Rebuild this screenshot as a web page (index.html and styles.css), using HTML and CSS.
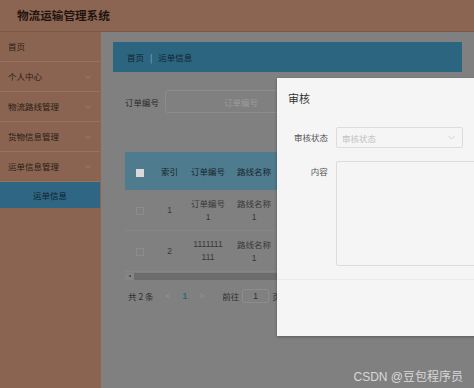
FILE: index.html
```html
<!DOCTYPE html>
<html lang="zh-CN">
<head>
    <meta charset="UTF-8">
    <meta name="viewport" content="width=device-width, initial-scale=1.0">
    <title>物流运输管理系统</title>
    <link rel="stylesheet" href="styles.css">
</head>
<body>
    <div class="header">
        <h1>物流运输管理系统</h1>
    </div>

    <div class="layout">
        <aside class="sidebar">
            <ul class="menu">
                <li class="menu-item">首页</li>
                <li class="menu-item">个人中心<span class="arrow"></span></li>
                <li class="menu-item">物流路线管理<span class="arrow"></span></li>
                <li class="menu-item">货物信息管理<span class="arrow"></span></li>
                <li class="menu-item">运单信息管理<span class="arrow"></span></li>
                <li class="menu-sub active">运单信息</li>
            </ul>
        </aside>

        <main class="main">
            <div class="breadcrumb">
                <span>首页</span>
                <span class="sep">|</span>
                <span>运单信息</span>
            </div>

            <div class="content">
                <form class="search">
                    <label for="orderNo">订单编号</label>
                    <input type="text" id="orderNo" placeholder="订单编号">
                </form>

                <div class="table-wrap">
                    <table class="grid">
                        <colgroup>
                            <col style="width:30px">
                            <col style="width:29px">
                            <col style="width:48px">
                            <col style="width:44px">
                            <col style="width:60px">
                        </colgroup>
                        <thead>
                            <tr>
                                <th><span class="check checked"></span></th>
                                <th>索引</th>
                                <th>订单编号</th>
                                <th>路线名称</th>
                                <th></th>
                            </tr>
                        </thead>
                        <tbody>
                            <tr>
                                <td><span class="check"></span></td>
                                <td class="num">1</td>
                                <td>订单编号<br><span class="num">1</span></td>
                                <td>路线名称<br><span class="num">1</span></td>
                                <td></td>
                            </tr>
                            <tr>
                                <td><span class="check"></span></td>
                                <td class="num">2</td>
                                <td class="num">1111111<br>111</td>
                                <td>路线名称<br><span class="num">1</span></td>
                                <td></td>
                            </tr>
                        </tbody>
                    </table>
                    <div class="scrollbar">
                        <span class="scroll-btn"></span>
                        <span class="scroll-thumb"></span>
                    </div>
                </div>

                <div class="pager">
                    <span>共 2 条</span>
                    <span class="pg-btn">&lt;</span>
                    <span class="pg-num">1</span>
                    <span class="pg-btn">&gt;</span>
                    <span class="goto">前往</span>
                    <input type="text" class="pg-input" value="1">
                    <span>页</span>
                </div>
            </div>
        </main>
    </div>

    <div class="dialog">
        <div class="dialog-title">审核</div>
        <div class="dialog-body">
            <div class="field">
                <label>审核状态</label>
                <div class="select">
                    <span class="placeholder">审核状态</span>
                    <svg width="7" height="5" viewBox="0 0 7 5"><path d="M0.5 1 L3.5 4 L6.5 1" fill="none" stroke="#c4c4c4" stroke-width="0.8"/></svg>
                </div>
            </div>
            <div class="field">
                <label>内容</label>
                <div class="textarea"></div>
            </div>
        </div>
        <div class="dialog-footer"></div>
    </div>

    <div class="watermark">CSDN @豆包程序员</div>
</body>
</html>
```

FILE: styles.css
```css
body {
    margin: 0;
    width: 474px;
    height: 388px;
    overflow: hidden;
    position: relative;
    font-family: 'Noto Sans CJK SC', sans-serif;
    font-size: 8.5px;
    background-color: #808080;
    color: #2f2f2f;
}
.num {
    font-family: 'Liberation Sans', 'Noto Sans CJK SC', sans-serif;
}
.header {
    height: 31px;
    background-color: #8c6552;
    border-bottom: 1px solid #7c5846;
}
.header h1 {
    margin: 0;
    padding-left: 17px;
    font-size: 11.6px;
    line-height: 30px;
    color: #1f1510;
    font-weight: bold;
}
.layout {
    display: flex;
    height: 356px;
}
.sidebar {
    width: 100px;
    flex-shrink: 0;
    background-color: #8b6451;
    border-right: 1px solid #94634d;
}
.menu {
    list-style: none;
    margin: 0;
    padding: 0;
}
.menu-item {
    height: 29px;
    line-height: 29px;
    padding-left: 8px;
    border-bottom: 1px solid #967060;
    color: #2a1c15;
    display: flex;
    justify-content: space-between;
    align-items: center;
}
.arrow {
    width: 3px;
    height: 3px;
    margin-right: 10px;
    margin-top: -2px;
    border-right: 1px solid #9a7464;
    border-bottom: 1px solid #9a7464;
    transform: rotate(45deg);
}
.menu-sub {
    height: 26px;
    line-height: 26px;
    padding-left: 33px;
    color: #10212b;
}
.active {
    background-color: #2e6683;
}
.main {
    flex: 1;
    min-width: 0;
    padding: 10px 0 0 12px;
    background-color: #808080;
}
.breadcrumb {
    height: 26px;
    line-height: 26px;
    margin-right: 12px;
    padding: 0 12px;
    background-color: #2c6580;
    border: 2px dotted #2c6580;
    color: #12232c;
}
.breadcrumb .sep {
    color: #9bb4c0;
    margin: 0 4px;
}
.content {
    padding: 0 12px;
}
.search {
    margin-top: 18px;
    display: flex;
    align-items: center;
}
.search label {
    color: #2b2b2b;
    width: 40px;
}
.search input {
    width: 150px;
    height: 21px;
    border: 1px solid #8c8c8c;
    border-radius: 3px;
    background-color: #808080;
    text-align: center;
    font-family: inherit;
    font-size: 8.5px;
    padding: 0;
}
.search input::placeholder {
    color: #9c9c9c;
}
.table-wrap {
    margin-top: 39px;
    width: 340px;
}
.grid {
    border-collapse: collapse;
    table-layout: fixed;
    width: 211px;
}
.grid th {
    height: 38px;
    background-color: #4f7b8f;
    color: #17252c;
    font-weight: normal;
    text-align: center;
    padding: 0;
}
.grid td {
    height: 40px;
    text-align: center;
    line-height: 13px;
    color: #383838;
    border-bottom: 1px solid #868686;
    padding: 0;
}
.check {
    display: inline-block;
    width: 6px;
    height: 6px;
    border: 1px solid #8c8c8c;
    vertical-align: middle;
}
.checked {
    background-color: #d9d9d9;
    border-color: #d9d9d9;
}
.scrollbar {
    display: flex;
    height: 7px;
    margin-top: 1px;
    background-color: #7a7a7a;
}
.scroll-btn {
    width: 9px;
    background-color: #858585;
    position: relative;
}
.scroll-btn::after {
    content: '';
    position: absolute;
    left: 3px;
    top: 2px;
    border-right: 3px solid #3a3a3a;
    border-top: 1.5px solid transparent;
    border-bottom: 1.5px solid transparent;
}
.scroll-thumb {
    flex: 1;
    background-color: #6c6c6c;
}
.pager {
    display: flex;
    align-items: center;
    margin-top: 9px;
    height: 14px;
    padding-left: 3px;
    color: #2e2e2e;
}
.pg-btn {
    color: #959595;
    margin-left: 12px;
    font-family: 'Liberation Sans', sans-serif;
}
.pg-num {
    color: #2a6a76;
    margin-left: 12px;
    font-weight: bold;
    font-family: 'Liberation Sans', sans-serif;
}
.goto {
    margin-left: 18px;
}
.pg-input {
    width: 25px;
    height: 12px;
    margin: 0 3px;
    border: 1px solid #8c8c8c;
    border-radius: 2px;
    background-color: #808080;
    text-align: center;
    font-size: 8.5px;
    padding: 0;
    color: #2e2e2e;
}
.dialog {
    position: absolute;
    left: 277px;
    top: 78px;
    width: 220px;
    height: 258px;
    background-color: #f5f5f5;
    box-shadow: 0 1px 3px rgba(0,0,0,0.3);
}
.dialog-title {
    padding: 13px 0 0 11px;
    font-size: 11px;
    line-height: 14px;
    color: #333;
}
.dialog-body {
    margin-top: 22px;
}
.field {
    display: flex;
    align-items: flex-start;
    margin-bottom: 13px;
}
.field label {
    width: 51px;
    text-align: right;
    margin-right: 8px;
    line-height: 21px;
    color: #555;
}
.select {
    width: 113px;
    height: 19px;
    border: 1px solid #dcdcdc;
    border-radius: 2px;
    display: flex;
    align-items: center;
    justify-content: space-between;
    padding: 0 7px 0 5px;
}
.placeholder {
    color: #c2c2c2;
}
.textarea {
    width: 160px;
    height: 103px;
    border: 1px solid #dcdcdc;
    border-radius: 2px;
}
.dialog-footer {
    margin-top: 10px;
    border-top: 1px solid #ececec;
}
.watermark {
    position: absolute;
    right: 11px;
    bottom: 4px;
    font-size: 12px;
    color: #d8d8d8;
    font-family: 'Liberation Sans', 'Noto Sans CJK SC', sans-serif;
}
```
